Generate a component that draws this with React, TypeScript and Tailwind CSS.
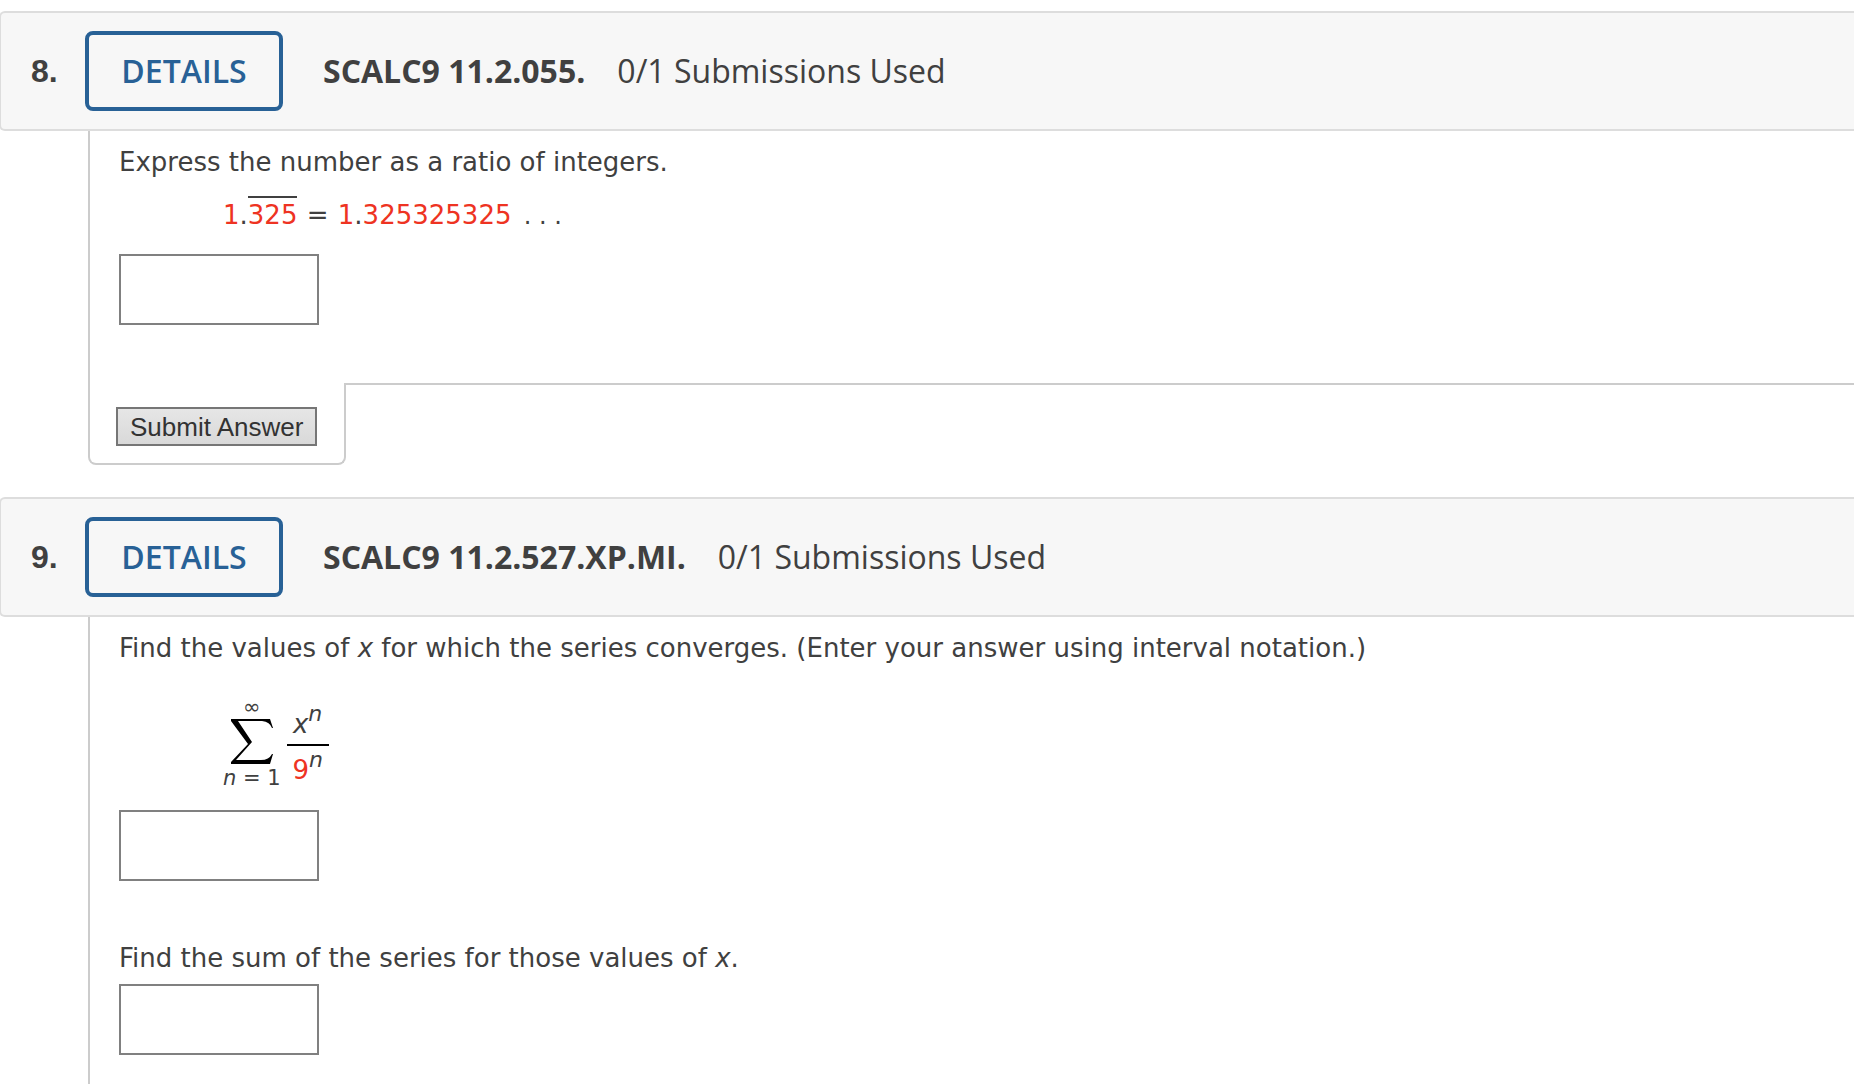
import React, { useState } from "react";

interface QuestionProps {
  number: number;
  code: string;
  submissions: string;
  grow?: boolean;
  children: React.ReactNode;
}

interface AnswerInputProps {
  id: string;
  value: string;
  onChange: (value: string) => void;
}

const Question: React.FC<QuestionProps> = ({
  number,
  code,
  submissions,
  grow = false,
  children,
}) => {
  return (
    <section className={grow ? "flex flex-col grow" : "flex flex-col"}>
      <header className="-ml-px flex items-center h-[120px] rounded-l-md border-2 border-r-0 border-[#dddddd] bg-[#f7f7f7] text-[32px] leading-10">
        <span className="w-[84px] pl-[30px] font-['Liberation_Sans',sans-serif] font-bold">
          {number}.
        </span>
        <button
          type="button"
          className="h-20 w-[198px] rounded-lg border-4 border-[#286196] text-[#286196] font-semibold cursor-pointer"
        >
          DETAILS
        </button>
        <h2 className="ml-10 font-bold">{code}</h2>
        <span className="ml-8">{submissions}</span>
      </header>
      {children}
    </section>
  );
};

const AnswerInput: React.FC<AnswerInputProps> = ({ id, value, onChange }) => (
  <input
    id={id}
    type="text"
    value={value}
    onChange={(e) => onChange(e.target.value)}
    className="block h-[71px] w-[200px] border-2 border-[#808080] bg-white px-3"
  />
);

// Body of a question, open on the right and indented under the header
const panelClass =
  "ml-[88px] border-l-2 border-[#cccccc] pl-[29px] pt-[15px] font-['DejaVu_Sans',sans-serif] text-[26px] leading-8";

const App: React.FC = () => {
  const [answers, setAnswers] = useState({ ratio: "", interval: "", sum: "" });

  const handleChange = (name: string) => (value: string) => {
    setAnswers((prev) => ({ ...prev, [name]: value }));
  };

  return (
    <main className="flex min-h-screen flex-col gap-8 overflow-x-hidden bg-white pt-[11px] font-['Open_Sans',sans-serif] text-[#404040]">
      <Question
        number={8}
        code="SCALC9 11.2.055."
        submissions="0/1 Submissions Used"
      >
        <form onSubmit={(e) => e.preventDefault()}>
          <div className={panelClass}>
            <label htmlFor="ratio" className="block">
              Express the number as a ratio of integers.
            </label>
            <p className="mt-[18px] pl-[104px]">
              <span className="text-[#ee3322]">1</span>.
              <span className="inline-block border-t-2 border-[#404040] pt-px">
                <span className="text-[#ee3322]">325</span>
              </span>{" "}
              <span className="px-px">=</span>{" "}
              <span className="text-[#ee3322]">1</span>.
              <span className="text-[#ee3322]">325325325</span>{" "}
              <span className="ml-1 text-2xl/8">. . .</span>
            </p>
            <div className="mt-[22px] pb-[58px]">
              <AnswerInput
                id="ratio"
                value={answers.ratio}
                onChange={handleChange("ratio")}
              />
            </div>
          </div>
          <div className="ml-[88px] flex">
            <div className="rounded-b-lg border-2 border-t-0 border-[#cccccc] pt-6 pr-[27px] pb-[17px] pl-[26px]">
              <button
                type="submit"
                className="block h-[39px] border-2 border-[#767676] bg-linear-to-b from-[#e6e6e6] to-[#d9d9d9] px-3 font-['Liberation_Sans',sans-serif] text-[26px] leading-8 text-[#333333] cursor-pointer"
              >
                Submit Answer
              </button>
            </div>
            <div className="grow border-t-2 border-[#cccccc]" />
          </div>
        </form>
      </Question>

      <Question
        number={9}
        code="SCALC9 11.2.527.XP.MI."
        submissions="0/1 Submissions Used"
        grow
      >
        <form
          className={`${panelClass} grow pb-6`}
          onSubmit={(e) => e.preventDefault()}
        >
          <label htmlFor="interval" className="block">
            Find the values of <i>x</i> for which the series converges. (Enter
            your answer using interval notation.)
          </label>
          <div className="mt-8 flex pl-[104px]">
            <div className="flex flex-col items-center text-[21px]">
              <span className="leading-[23px]">∞</span>
              <svg
                width="42"
                height="45"
                viewBox="0 0 42 45"
                className="block"
                role="img"
                aria-label="sum"
              >
                <path
                  d="M0 0H39L42 9H41Q39 3 31 2H7L21 23L5 41H30Q38 41 41 35H42L39 45H0V43L17 25L0 2Z"
                  fill="#000000"
                />
              </svg>
              <span className="leading-7">
                <i>n</i> = 1
              </span>
            </div>
            <div className="ml-1.5 mt-1 flex flex-col items-center">
              <span className="flex items-end pb-1">
                <i>x</i>
                <i className="mb-3 text-[22px] leading-7">n</i>
              </span>
              <span className="h-0.5 w-[42px] bg-black" />
              <span className="flex items-end">
                <span className="text-[#ee3322]">9</span>
                <i className="mb-3 text-[22px] leading-7">n</i>
              </span>
            </div>
          </div>
          <div className="mt-[18px]">
            <AnswerInput
              id="interval"
              value={answers.interval}
              onChange={handleChange("interval")}
            />
          </div>
          <label htmlFor="sum" className="mt-[61px] mb-2.5 block">
            Find the sum of the series for those values of <i>x</i>.
          </label>
          <AnswerInput
            id="sum"
            value={answers.sum}
            onChange={handleChange("sum")}
          />
        </form>
      </Question>
    </main>
  );
};

export default App;
